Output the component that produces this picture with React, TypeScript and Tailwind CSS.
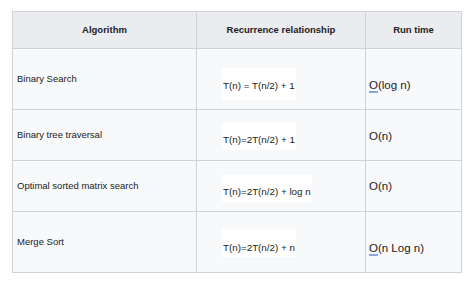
import React from "react";

const font = { fontFamily: '"Liberation Sans", Arial, sans-serif' };

type Row = {
  algo: string;
  formula: string;
  runtime: React.ReactNode;
  h: string;
  boxTop: string;
  boxCls: string;
  rtTop: string;
};

const O = (rest: string) => (
  <>
    <span className="underline decoration-[#8aa6e0] decoration-[1.5px] underline-offset-[2px]">O</span>
    {rest}
  </>
);

const rows: Row[] = [
  {
    algo: "Binary Search",
    formula: "T(n) = T(n/2) + 1",
    runtime: O("(log n)"),
    h: "h-[61px]",
    boxTop: "pt-[19px]",
    boxCls: "pt-[12px] pb-[8px]",
    rtTop: "pt-[29px]",
  },
  {
    algo: "Binary tree traversal",
    formula: "T(n)=2T(n/2) + 1",
    runtime: "O(n)",
    h: "h-[51px]",
    boxTop: "pt-[13px]",
    boxCls: "pt-[11px] pb-[4px]",
    rtTop: "pt-[19px]",
  },
  {
    algo: "Optimal sorted matrix search",
    formula: "T(n)=2T(n/2) + log n",
    runtime: "O(n)",
    h: "h-[51px]",
    boxTop: "pt-[14px]",
    boxCls: "pt-[11px] pb-[4px]",
    rtTop: "pt-[18px]",
  },
  {
    algo: "Merge Sort",
    formula: "T(n)=2T(n/2) + n",
    runtime: O("(n Log n)"),
    h: "h-[61px]",
    boxTop: "pt-[17px]",
    boxCls: "pt-[13px] pb-[3px]",
    rtTop: "pt-[29px]",
  },
];

export default function App() {
  return (
    <div className="w-[474px] h-[285px] bg-white pt-[11px] pl-[12px]" style={font}>
      <div className="w-[450px] border-l border-t border-[#cfd2d6] grid grid-cols-[184px_169px_96px] text-[#222222]">
        {/* header */}
        <div className="h-[37px] bg-[#eaecf0] border-r border-b border-[#cfd2d6] flex items-center justify-center font-bold text-[9.5px]">
          Algorithm
        </div>
        <div className="h-[37px] bg-[#eaecf0] border-r border-b border-[#cfd2d6] flex items-center justify-center font-bold text-[9.5px]">
          Recurrence relationship
        </div>
        <div className="h-[37px] bg-[#eaecf0] border-r border-b border-[#cfd2d6] flex items-center justify-center font-bold text-[9.5px]">
          Run time
        </div>
        {rows.map((r) => (
          <React.Fragment key={r.algo}>
            <div className={`${r.h} bg-[#f8f9fa] border-r border-b border-[#cfd2d6] flex items-center pl-[4px] text-[9.5px] leading-[12px]`}>
              {r.algo}
            </div>
            <div className={`${r.h} bg-[#f8f9fa] border-r border-b border-[#cfd2d6] pl-[25px] ${r.boxTop}`}>
              <span className={`inline-block bg-white px-[1px] text-[9.8px] leading-[12px] ${r.boxCls}`}>
                {r.formula}
              </span>
            </div>
            <div className={`${r.h} bg-[#f8f9fa] border-r border-b border-[#cfd2d6] pl-[3px] ${r.rtTop} text-[11.5px] leading-[14px]`}>
              {r.runtime}
            </div>
          </React.Fragment>
        ))}
      </div>
    </div>
  );
}
